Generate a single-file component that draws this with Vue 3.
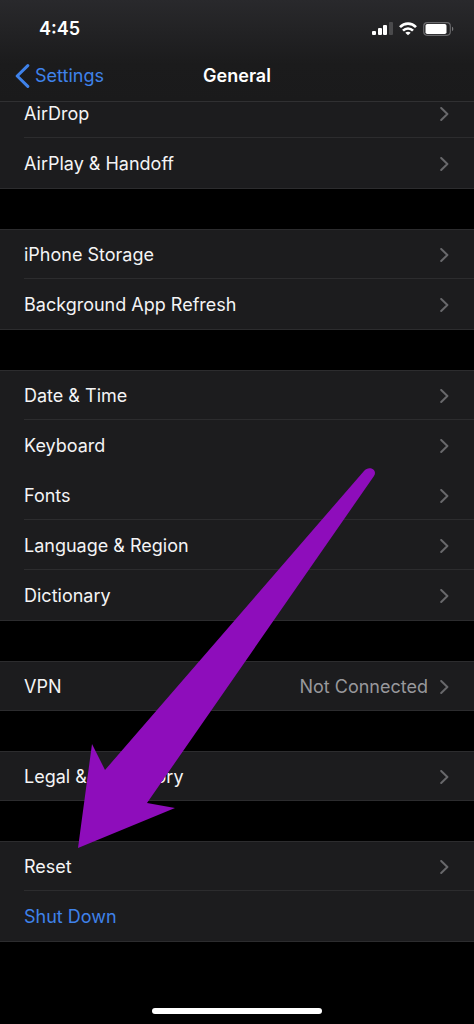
<script setup>
const groups = [
  { id: 'sharing', rows: [{ label: 'AirDrop' }, { label: 'AirPlay & Handoff' }] },
  { id: 'storage', rows: [{ label: 'iPhone Storage' }, { label: 'Background App Refresh' }] },
  {
    id: 'input',
    rows: [
      { label: 'Date & Time' },
      { label: 'Keyboard', plain: true },
      { label: 'Fonts' },
      { label: 'Language & Region' },
      { label: 'Dictionary' },
    ],
  },
  { id: 'vpn', rows: [{ label: 'VPN', value: 'Not Connected' }] },
  { id: 'legal', rows: [{ label: 'Legal & Regulatory' }] },
  { id: 'power', rows: [{ label: 'Reset' }, { label: 'Shut Down', action: true }] },
]
</script>

<template>
  <div class="screen">
    <header class="top">
      <div class="status">
        <time class="clock">4:45</time>
        <div class="indicators">
          <svg width="21" height="14" viewBox="0 0 21 14" role="img" aria-label="Signal">
            <g fill="#fff">
              <rect x="0" y="9" width="4" height="4" rx="1" />
              <rect x="6" y="6" width="4" height="7" rx="1" />
              <rect x="11" y="3" width="4" height="10" rx="1" />
            </g>
            <rect x="17" y="0" width="4" height="13" rx="1" fill="#4a4a4c" />
          </svg>
          <svg width="18" height="14" viewBox="0 0 18 14" role="img" aria-label="Wi-Fi">
            <g fill="none" stroke="#fff" stroke-width="2.6">
              <path d="M1 5.2C5.5.4 12.5.4 17 5.2" />
              <path d="M4 8.6C6.8 5.7 11.2 5.7 14 8.6" />
            </g>
            <path d="M9 13.3L6.3 10.7C7.8 9.3 10.2 9.3 11.7 10.7Z" fill="#fff" />
          </svg>
          <svg width="31" height="14" viewBox="0 0 31 14" role="img" aria-label="Battery">
            <rect x="0.7" y="0.7" width="26.6" height="12.6" rx="3.5" fill="none" stroke="#68686b" stroke-width="1.2" />
            <rect x="2.5" y="2" width="21" height="10" rx="1.8" fill="#fff" />
            <path d="M29 4.8C30.7 5.3 30.7 8.7 29 9.2Z" fill="#77777a" />
          </svg>
        </div>
      </div>
      <nav class="nav">
        <a class="back" href="#settings">
          <svg width="15" height="24" viewBox="0 0 15 24" aria-hidden="true">
            <path d="M12.8 1.6L2.2 12L12.8 22.4" fill="none" stroke="#3f82ea" stroke-width="3" stroke-linecap="round" stroke-linejoin="round" />
          </svg>
          <span>Settings</span>
        </a>
        <h1 class="title">General</h1>
      </nav>
    </header>

    <main class="list">
      <section
        v-for="group in groups"
        :key="group.id"
        class="group"
        :class="{ tall: group.rows.length > 1 }"
      >
        <button
          v-for="row in group.rows"
          :key="row.label"
          type="button"
          class="row"
          :class="{ plain: row.plain, action: row.action }"
        >
          <span class="label">{{ row.label }}</span>
          <span v-if="row.value" class="value">{{ row.value }}</span>
          <svg v-if="!row.action" width="9" height="14" viewBox="0 0 9 14" aria-hidden="true">
            <path d="M1.2 1L7.4 7L1.2 13" fill="none" stroke="#68686b" stroke-width="2" stroke-linecap="round" stroke-linejoin="round" />
          </svg>
        </button>
      </section>
    </main>

    <svg class="arrow" width="298" height="382" viewBox="0 0 298 382" aria-hidden="true">
      <path d="M0 381L14 277L27 303L286 4C291-2 300 3 296 9L69 336L97 341Z" fill="#8e0dbb" />
    </svg>

    <div class="home"></div>
  </div>
</template>

<style>
html,
body {
  background: #000;
}
</style>

<style scoped>
.screen {
  position: relative;
  display: flex;
  flex-direction: column;
  min-height: 100vh;
  overflow: hidden;
  background: #000;
  color: #f4f4f5;
  font-family: Inter, "Liberation Sans", sans-serif;
  font-size: 18px;
  line-height: 24px;
}

.top {
  z-index: 1;
  border-bottom: 1px solid #303032;
  background: linear-gradient(#29292c, #1b1b1c 64px, #1a1a1b);
}

.status {
  display: flex;
  align-items: flex-end;
  justify-content: space-between;
  height: 41px;
  padding: 0 20px 0 39px;
}

.clock {
  color: #fff;
  font-weight: 600;
}

.indicators {
  display: flex;
  align-items: center;
  gap: 6px;
  height: 24px;
}

.nav {
  display: grid;
  grid-template-columns: 1fr auto 1fr;
  align-items: center;
  height: 60px;
  padding: 10px 15px 0;
  box-sizing: border-box;
}

.back {
  display: flex;
  align-items: center;
  gap: 5px;
  color: #3f82ea;
  text-decoration: none;
}

.title {
  margin: 0;
  color: #fff;
  font-size: 18px;
  font-weight: 600;
}

.list {
  display: flex;
  flex-direction: column;
  gap: 40px;
  margin-top: -14px;
}

.group {
  border: solid #2c2c2e;
  border-width: 1px 0;
  background: #1c1c1e;
}

.row {
  display: flex;
  align-items: center;
  width: calc(100% - 24px);
  height: 50px;
  margin: 0 0 0 24px;
  padding: 2px 25px 0 0;
  border: 0;
  border-bottom: 1px solid #2c2c2e;
  background: none;
  color: inherit;
  font: inherit;
  text-align: left;
}

.row:first-child {
  height: 49px;
}

.row:last-child {
  border-bottom: 0;
}

.group:not(.tall) .row {
  height: 48px;
}

.row.plain {
  border-bottom-color: transparent;
}

.label {
  flex: 1;
}

.value {
  margin-right: 12px;
  color: #98989c;
}

.row.action {
  color: #3f82ea;
}

.arrow {
  position: absolute;
  top: 467px;
  left: 78px;
  z-index: 2;
  pointer-events: none;
}

.home {
  width: 36%;
  height: 6px;
  margin: auto auto 10px;
  border-radius: 3px;
  background: #fff;
}
</style>
